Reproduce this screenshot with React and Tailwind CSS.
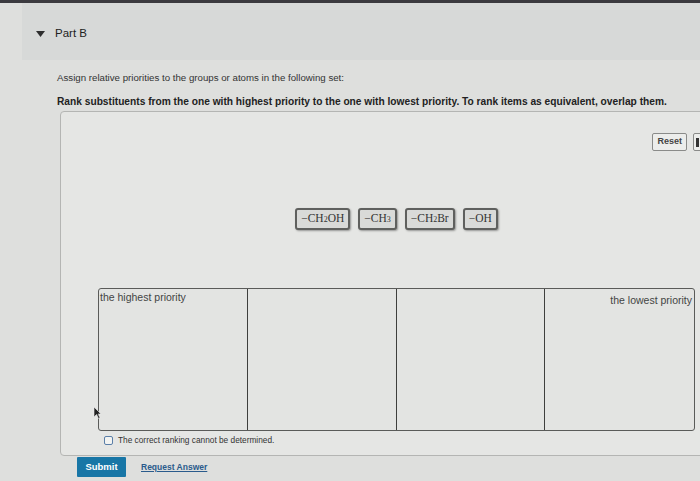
export default function App() {
  const chips = [
    <>−CH<sub className="text-[8px] relative top-[1px]">2</sub>OH</>,
    <>−CH<sub className="text-[8px] relative top-[1px]">3</sub></>,
    <>−CH<sub className="text-[8px] relative top-[1px]">2</sub>Br</>,
    <>−OH</>,
  ]

  return (
    <div className="relative w-[700px] h-[481px] overflow-hidden bg-[#dedfdd] text-[#2b2b2b] font-['Liberation_Sans',Arial,sans-serif]">
      <div className="h-[3px] bg-[#3b3a3f]" />
      <div className="ml-[22px] h-[57px] bg-[#d7d9d8] flex items-center pl-[14px] pt-[4px] gap-[10px]">
        <svg width="9" height="6" viewBox="0 0 9 6">
          <path d="M0 0 H9 L4.5 6 Z" fill="#2e2e2e" />
        </svg>
        <span className="text-[11.5px] text-[#222]">Part B</span>
      </div>

      <div className="pl-[57px]">
        <p className="mt-[12px] text-[9.7px] leading-[12px] text-[#333]">
          Assign relative priorities to the groups or atoms in the following set:
        </p>
        <p className="mt-[12px] text-[10.2px] leading-[12px] font-bold text-[#222] whitespace-nowrap">
          Rank substituents from the one with highest priority to the one with lowest priority. To rank items as equivalent, overlap them.
        </p>

        <div className="ml-[3px] mt-[3px] w-[673px] h-[345px] border border-[#b4b5b3] rounded-[4px] bg-[#e5e6e4] flex flex-col">
          <div className="mt-[21px] flex justify-end gap-[6px] mr-[-1px]">
            <button className="h-[18px] px-[4px] border border-[#8a8b89] rounded-[2px] bg-[#ecedeb] text-[9px] font-bold text-[#444]">
              Reset
            </button>
            <button className="h-[18px] w-[40px] border border-[#8a8b89] rounded-[2px] bg-[#ecedeb] flex items-center pl-[2px]">
              <span className="block w-[3px] h-[9px] bg-[#333]" />
            </button>
          </div>

          <div className="mt-[57px] flex justify-center gap-[8px] font-['Liberation_Serif','Times_New_Roman',serif]">
            {chips.map((c, i) => (
              <div
                key={i}
                className="h-[22px] px-[4px] flex items-center border-2 border-[#5f605e] rounded-[3px] bg-[#d9dad8] shadow-[1px_1px_2px_rgba(0,0,0,0.35)] text-[11.5px] text-[#333] leading-none"
              >
                {c}
              </div>
            ))}
          </div>

          <div className="mt-[58px] mx-[37px] h-[143px] grid grid-cols-4 border border-[#5a5b59] rounded-[3px] bg-[#e3e4e2]">
            <div className="border-r border-[#3e3f3d] px-[1px] pt-[1px] text-[10.5px] text-[#444] whitespace-nowrap">the highest priority</div>
            <div className="border-r border-[#3e3f3d]" />
            <div className="border-r border-[#3e3f3d]" />
            <div className="px-[2px] pt-[4px] text-right text-[10.5px] text-[#444] whitespace-nowrap">the lowest priority</div>
          </div>

          <div className="mt-[3px] ml-[43px] flex items-center gap-[5px]">
            <div className="w-[9px] h-[9px] border border-[#5b7fa8] rounded-[2px] bg-[#f2f3f1]" />
            <span className="text-[8.3px] text-[#333]">The correct ranking cannot be determined.</span>
          </div>
        </div>

        <div className="mt-[1px] ml-[20px] flex items-center gap-[15px]">
          <button className="w-[49px] h-[20px] bg-[#1876a6] rounded-[1px] text-white text-[9.5px] font-bold">
            Submit
          </button>
          <span className="text-[8.5px] font-bold text-[#2a5b8c] underline">Request Answer</span>
        </div>
      </div>

      <svg className="absolute left-[93px] top-[406px]" width="9" height="13" viewBox="0 0 9 13">
        <path d="M1 1 L1 11 L3.5 8.5 L5.5 12.5 L7 11.8 L5 8 L8 8 Z" fill="#222" stroke="#eee" strokeWidth="0.6" />
      </svg>
    </div>
  )
}
